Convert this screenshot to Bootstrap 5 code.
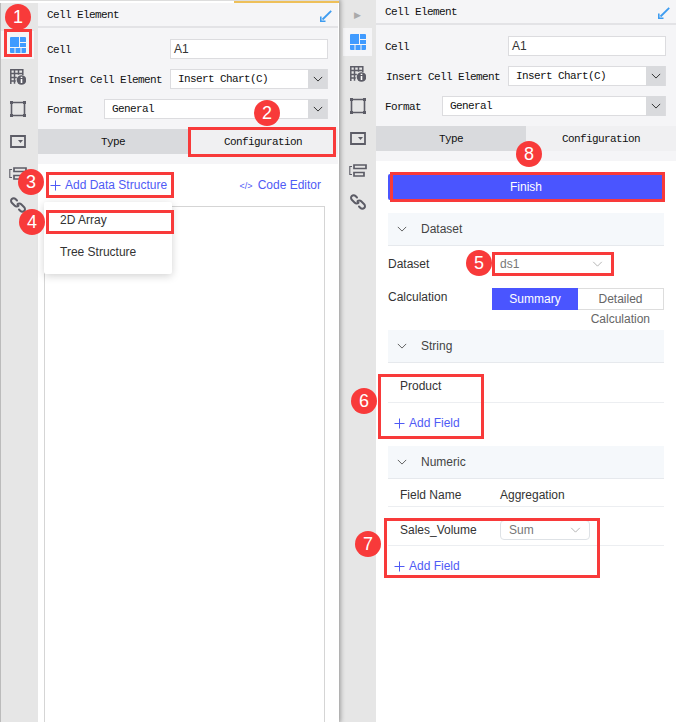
<!DOCTYPE html>
<html lang="en">
<head>
<meta charset="UTF-8">
<meta name="viewport" content="width=device-width,initial-scale=1">
<title>Cell Element</title>
<link href="https://cdn.jsdelivr.net/npm/bootstrap@5.3.3/dist/css/bootstrap.min.css" rel="stylesheet">
<style>
html,body{margin:0;background:#fff}
body{font-family:"Liberation Sans",Arial,sans-serif;font-size:12px;color:#333}
.shot{position:relative;width:676px;height:722px;overflow:hidden}
.pane-left{width:339px;height:722px;border-top:1px solid #ddd;padding-top:2px;box-shadow:0 0 5px 1px rgba(0,0,0,.4);position:relative;background:#fff;z-index:1}
.pane-right{flex:1;height:722px;background:#e6e6e6}
.rail{background:#e6e6e6}
.rail-l{width:38px;border-left:1px solid #bbb;padding-right:4px}
.rail-r{width:37px;padding:0 4px}
.rail-btn{height:32px;width:100%;display:flex;align-items:center;justify-content:center}
.rail-btn.on{background:#f5f5f7;height:28px;margin-bottom:2px}
.rail-l .rail-btn.on{margin-top:28px}
.rail-arrow{height:28px;display:flex;align-items:center;justify-content:center;color:#aaa;font-size:9px;padding-top:4px}
.body-col{width:300px;background:#fff;height:100%}
.prop-area{background:#f5f5f7;height:161px}
.mono{font-family:"Liberation Mono","Courier New",monospace;font-size:11px;letter-spacing:-.6px;color:#111}
.prop-head{height:25px;border-bottom:2px solid #e3e3e6;padding:2px 6px 0 9px}
.prop-rows{padding:11px 10px 0 9px}
.prop-row{height:20px;margin-bottom:10px;display:flex;align-items:center}
.prop-label{padding-top:3px}
.lbl-wide{width:123px}
.lbl-inset{margin-left:1px;width:122px}
.lbl-short{width:57px}
.prop-input{flex:none;height:20px;background:#fff;border:1px solid #dcdcdf;display:flex;align-items:center;position:relative;padding-left:7px;width:158px}
.prop-input.plain{font-family:"Liberation Sans",sans-serif;font-size:12px;letter-spacing:0;padding-left:3px;color:#333}
.prop-input.long{width:224px}
.prop-caret{position:absolute;right:0;top:-1px;bottom:-1px;width:19px;background:#d9dadd;display:flex;align-items:center;justify-content:center}
.tab-row{height:25px}
.tab-item{width:150px;display:flex;align-items:center;justify-content:center;background:#d9dadd;padding-top:2px}
.tab-item.on{background:#f0f0f2}
.link-blue{color:#4f5bf5}
.add-row{height:42px;padding:0 17px 0 12px}
.code-tag{font-size:9px;margin-right:5px}
.struct-box{margin:0 13px 0 6px;height:520px;border:1px solid #d5d5d5;border-bottom:0}
.struct-menu{position:absolute;left:44px;top:201px;width:128px;height:72px;background:#fff;border-radius:2px;box-shadow:0 2px 8px rgba(0,0,0,.18);padding-top:2px;z-index:2}
.struct-menu div{height:32px;padding-left:16px;line-height:32px;color:#333}
.finish-btn{background:#4a55ff;color:#fff;font-size:12px;width:276px;height:26px;margin:13px 0 13px 12px;border:0;border-radius:2px;padding:0;display:block}
.cfg{padding:0 12px}
.sect-head{height:33px;background:#f5f8fb;border-bottom:1px solid #e6e9ed;display:flex;align-items:center;padding-left:9px;gap:14px;color:#444}
.cfg-row{display:flex;align-items:center}
.row-dataset{height:35px}
.row-calc{margin-top:7px}
.cfg-label{width:104px}
.soft-select{height:20px;display:flex;align-items:center;justify-content:space-between;color:#777;padding:0 6px 0 8px;background:#fff}
.soft-select svg{color:#aaa}
.select-ds{width:117px}
.select-agg{width:90px;padding-right:8px}
.seg{width:172px;height:22px}
.seg-on{width:86px;background:#4a55ff;color:#fff;display:flex;align-items:center;justify-content:center}
.seg-off{flex:1;border:1px solid #ddd;border-left:0;color:#666;display:flex;align-items:center;justify-content:center}
.calc-wrap{height:20px;line-height:18px;color:#666;padding-right:14px}
.field-row{height:40px;padding:6px 0 0 12px;border-bottom:1px solid #eceef1;display:flex;align-items:center}
.row-names{height:28px;padding-top:5px}
.row-sales{height:39px;padding-top:7px}
.col-name{width:100px}
.add-field{height:43px;padding:0 0 3px 6px;display:flex;align-items:center;gap:4px}
.add-field.last{height:40px;padding-bottom:0}
.mark-box{position:absolute;border:3px solid #f83a3a;z-index:3}
.mark-num{position:absolute;width:26px;height:26px;border-radius:50%;background:#f83a3a;color:#fff;font-size:18px;display:flex;align-items:center;justify-content:center;z-index:4}
.top-line{position:absolute;left:234px;top:0;width:105px;height:2px;background:#eec05a;z-index:2}
/* annotation places */
.b1{left:4px;top:29px;width:28px;height:28px}
.b2{left:188px;top:127px;width:148px;height:30px}
.b3{left:46px;top:172px;width:128px;height:26px}
.b4{left:46px;top:210px;width:128px;height:24px}
.b5{left:492px;top:252px;width:122px;height:24px}
.b6{left:378px;top:374px;width:106px;height:65px}
.b7{left:384px;top:518px;width:216px;height:60px}
.b8{left:390px;top:172px;width:275px;height:30px}
.n1{left:5px;top:4px}
.n2{left:254px;top:100px}
.n3{left:18px;top:169px}
.n4{left:19px;top:209px}
.n5{left:466px;top:250px}
.n6{left:351px;top:388px}
.n7{left:355px;top:531px}
.n8{left:516px;top:141px}
</style>
</head>
<body>
<svg width="0" height="0" class="d-none">
  <defs>
    <symbol id="i-grid" viewBox="0 0 16 16"><path fill="#409bff" d="M0 1a1 1 0 0 1 1-1h8v10H0zM10 0h5a1 1 0 0 1 1 1v4h-6zM10 6h6v4h-6zM0 11h4.500v5H1a1 1 0 0 1-1-1zM5.500 11h5v5h-5zM11.500 11H16v4a1 1 0 0 1-1 1h-3.500z"/></symbol>
    <symbol id="i-info" viewBox="0 0 16 16"><path fill="none" stroke="#5c5c66" stroke-width="1.500" d="M.8 15V.8h12V6M.8 4.500h12M.8 8.500h6M.8 12h5M4.500.8v14M8.500.8v5"/><circle cx="11.500" cy="11" r="4.800" fill="#5c5c66"/><path stroke="#fff" stroke-width="1.600" d="M11.500 10v4M11.500 7.800v1.200"/></symbol>
    <symbol id="i-frame" viewBox="0 0 16 16"><path fill="none" stroke="#5c5c66" stroke-width="1.600" d="M1.500 1.500h13v13h-13z"/><path fill="#5c5c66" d="M0 0h3v3H0zM13 0h3v3h-3zM0 13h3v3H0zM13 13h3v3h-3z"/></symbol>
    <symbol id="i-drop" viewBox="0 0 16 13"><path fill="none" stroke="#5c5c66" stroke-width="1.800" d="M1 1h14v11H1z"/><path fill="#5c5c66" d="M8 5h5l-2.500 3z"/></symbol>
    <symbol id="i-rows" viewBox="0 0 18 13"><path fill="none" stroke="#5c5c66" stroke-width="1.100" d="M3 2.500H.8v8H3"/><path fill="none" stroke="#5c5c66" stroke-width="1.700" d="M5 1h12v3.500H5zM5 8.500h10v3.500H5z"/></symbol>
    <symbol id="i-link" viewBox="0 0 16 16"><path fill="none" stroke="#5c5c66" stroke-width="2" stroke-linecap="round" d="M7 3.500 5.500 2a2.600 2.600 0 0 0-3.700 0 2.600 2.600 0 0 0 0 3.700l3 3a2.600 2.600 0 0 0 3.700 0M9 12.500l1.500 1.500a2.600 2.600 0 0 0 3.700 0 2.600 2.600 0 0 0 0-3.700l-3-3a2.600 2.600 0 0 0-3.700 0"/></symbol>
    <symbol id="i-collapse" viewBox="0 0 12 12"><path fill="none" stroke="#3d9cf0" stroke-width="1.800" d="M11.200.8 2.500 9.500"/><path fill="#3d9cf0" d="M0 6.500V12h5.500v-1.600H1.600V6.500z"/></symbol>
    <symbol id="i-down" viewBox="0 0 12 7"><path fill="none" stroke="currentColor" stroke-width="1" d="m1 1 5 5 5-5"/></symbol>
    <symbol id="i-plus" viewBox="0 0 11 11"><path fill="none" stroke="#4f5bf5" stroke-width="1" d="M5.500.5v10M.5 5.500h10"/></symbol>
  </defs>
</svg>

<div class="shot d-flex">

  <!-- left: before the dataset is picked -->
  <div class="pane-left d-flex">
    <div class="top-line"></div>
    <div class="rail rail-l flex-shrink-0">
      <div class="rail-btn on"><svg width="16" height="16"><use href="#i-grid"/></svg></div>
      <div class="rail-btn"><svg width="16" height="16"><use href="#i-info"/></svg></div>
      <div class="rail-btn"><svg width="16" height="16"><use href="#i-frame"/></svg></div>
      <div class="rail-btn"><svg width="16" height="13"><use href="#i-drop"/></svg></div>
      <div class="rail-btn"><svg width="18" height="13"><use href="#i-rows"/></svg></div>
      <div class="rail-btn"><svg width="16" height="16"><use href="#i-link"/></svg></div>
    </div>
    <div class="body-col">
      <div class="prop-area">
        <div class="prop-head d-flex align-items-center justify-content-between mono"><span>Cell Element</span><svg width="12" height="12"><use href="#i-collapse"/></svg></div>
        <div class="prop-rows mono">
          <div class="prop-row"><span class="prop-label lbl-wide">Cell</span><div class="prop-input plain">A1</div></div>
          <div class="prop-row"><span class="prop-label lbl-inset">Insert Cell Element</span><div class="prop-input">Insert Chart(C)<span class="prop-caret"><svg width="10" height="6"><use href="#i-down"/></svg></span></div></div>
          <div class="prop-row"><span class="prop-label lbl-short">Format</span><div class="prop-input long">General<span class="prop-caret"><svg width="10" height="6"><use href="#i-down"/></svg></span></div></div>
        </div>
        <div class="tab-row d-flex mono">
          <div class="tab-item">Type</div>
          <div class="tab-item on">Configuration</div>
        </div>
      </div>
      <div class="add-row d-flex align-items-center justify-content-between link-blue">
        <span class="d-flex align-items-center gap-1"><svg width="11" height="11"><use href="#i-plus"/></svg>Add Data Structure</span>
        <span><span class="code-tag">&lt;/&gt;</span>Code Editor</span>
      </div>
      <div class="struct-box"></div>
    </div>
    <div class="struct-menu"><div>2D Array</div><div>Tree Structure</div></div>
  </div>

  <!-- right: configured -->
  <div class="pane-right d-flex">
    <div class="rail rail-r flex-shrink-0">
      <div class="rail-arrow">&#9654;</div>
      <div class="rail-btn on"><svg width="16" height="16"><use href="#i-grid"/></svg></div>
      <div class="rail-btn"><svg width="16" height="16"><use href="#i-info"/></svg></div>
      <div class="rail-btn"><svg width="16" height="16"><use href="#i-frame"/></svg></div>
      <div class="rail-btn"><svg width="16" height="13"><use href="#i-drop"/></svg></div>
      <div class="rail-btn"><svg width="18" height="13"><use href="#i-rows"/></svg></div>
      <div class="rail-btn"><svg width="16" height="16"><use href="#i-link"/></svg></div>
    </div>
    <div class="body-col">
      <div class="prop-area">
        <div class="prop-head d-flex align-items-center justify-content-between mono"><span>Cell Element</span><svg width="12" height="12"><use href="#i-collapse"/></svg></div>
        <div class="prop-rows mono">
          <div class="prop-row"><span class="prop-label lbl-wide">Cell</span><div class="prop-input plain">A1</div></div>
          <div class="prop-row"><span class="prop-label lbl-inset">Insert Cell Element</span><div class="prop-input">Insert Chart(C)<span class="prop-caret"><svg width="10" height="6"><use href="#i-down"/></svg></span></div></div>
          <div class="prop-row"><span class="prop-label lbl-short">Format</span><div class="prop-input long">General<span class="prop-caret"><svg width="10" height="6"><use href="#i-down"/></svg></span></div></div>
        </div>
        <div class="tab-row d-flex mono">
          <div class="tab-item">Type</div>
          <div class="tab-item on">Configuration</div>
        </div>
      </div>
      <button class="finish-btn">Finish</button>
      <div class="cfg">
        <div class="sect-head"><svg width="10" height="6"><use href="#i-down"/></svg>Dataset</div>
        <div class="cfg-row row-dataset"><span class="cfg-label">Dataset</span><div class="soft-select select-ds">ds1<svg width="11" height="6"><use href="#i-down"/></svg></div></div>
        <div class="cfg-row align-items-start row-calc"><span class="cfg-label">Calculation</span><div class="seg d-flex"><div class="seg-on">Summary</div><div class="seg-off">Detailed</div></div></div>
        <div class="text-end calc-wrap">Calculation</div>
        <div class="sect-head"><svg width="10" height="6"><use href="#i-down"/></svg>String</div>
        <div class="field-row">Product</div>
        <div class="add-field link-blue"><svg width="11" height="11"><use href="#i-plus"/></svg>Add Field</div>
        <div class="sect-head"><svg width="10" height="6"><use href="#i-down"/></svg>Numeric</div>
        <div class="field-row row-names"><span class="col-name">Field Name</span>Aggregation</div>
        <div class="field-row row-sales"><span class="col-name">Sales_Volume</span><div class="soft-select select-agg border rounded-1">Sum<svg width="11" height="6"><use href="#i-down"/></svg></div></div>
        <div class="add-field last link-blue"><svg width="11" height="11"><use href="#i-plus"/></svg>Add Field</div>
      </div>
    </div>
  </div>

  <!-- annotations over the screenshot -->
  <div class="mark-box b1"></div>
  <div class="mark-box b2"></div>
  <div class="mark-box b3"></div>
  <div class="mark-box b4"></div>
  <div class="mark-box b5"></div>
  <div class="mark-box b6"></div>
  <div class="mark-box b7"></div>
  <div class="mark-box b8"></div>
  <div class="mark-num n1">1</div>
  <div class="mark-num n2">2</div>
  <div class="mark-num n3">3</div>
  <div class="mark-num n4">4</div>
  <div class="mark-num n5">5</div>
  <div class="mark-num n6">6</div>
  <div class="mark-num n7">7</div>
  <div class="mark-num n8">8</div>
</div>

<script src="https://cdn.jsdelivr.net/npm/bootstrap@5.3.3/dist/js/bootstrap.bundle.min.js"></script>
</body>
</html>
